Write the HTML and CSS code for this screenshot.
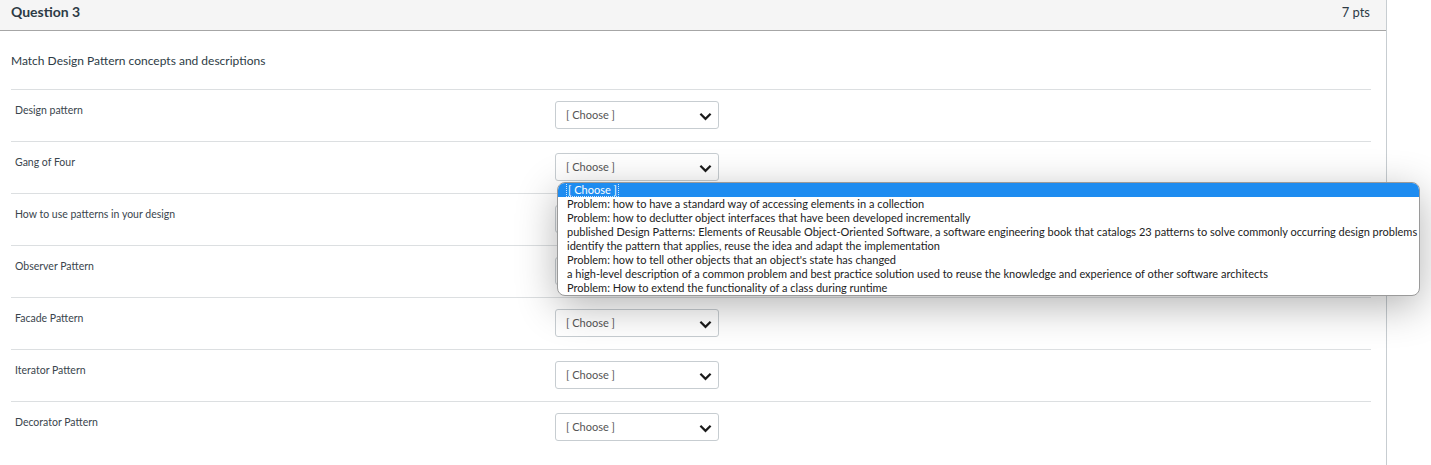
FILE: index.html
```html
<!DOCTYPE html>
<html lang="en">
<head>
    <meta charset="UTF-8">
    <title>Question 3</title>
    <link rel="stylesheet" href="styles.css">
</head>
<body>
    <div class="question">
        <div class="question-header">
            <span class="question-name">Question 3</span>
            <span class="question-points">7 pts</span>
        </div>
        <div class="question-text">Match Design Pattern concepts and descriptions</div>
        <div class="answers">
            <div class="answer">
                <div class="answer-label">Design pattern</div>
                <div class="select"><span>[ Choose ]</span><svg class="chevron" viewBox="0 0 14 9"><path d="M1.5 1.5 L7 7 L12.5 1.5"/></svg></div>
            </div>
            <div class="answer">
                <div class="answer-label">Gang of Four</div>
                <div class="select open"><span>[ Choose ]</span><svg class="chevron" viewBox="0 0 14 9"><path d="M1.5 1.5 L7 7 L12.5 1.5"/></svg>
                    <ul class="options">
                        <li class="selected"><span>[ Choose ]</span></li>
                        <li>Problem: how to have a standard way of accessing elements in a collection</li>
                        <li>Problem: how to declutter object interfaces that have been developed incrementally</li>
                        <li>published Design Patterns: Elements of Reusable Object-Oriented Software, a software engineering book that catalogs 23 patterns to solve commonly occurring design problems</li>
                        <li>identify the pattern that applies, reuse the idea and adapt the implementation</li>
                        <li>Problem: how to tell other objects that an object's state has changed</li>
                        <li>a high-level description of a common problem and best practice solution used to reuse the knowledge and experience of other software architects</li>
                        <li>Problem: How to extend the functionality of a class during runtime</li>
                    </ul>
                </div>
            </div>
            <div class="answer">
                <div class="answer-label">How to use patterns in your design</div>
                <div class="select"><span>[ Choose ]</span><svg class="chevron" viewBox="0 0 14 9"><path d="M1.5 1.5 L7 7 L12.5 1.5"/></svg></div>
            </div>
            <div class="answer">
                <div class="answer-label">Observer Pattern</div>
                <div class="select"><span>[ Choose ]</span><svg class="chevron" viewBox="0 0 14 9"><path d="M1.5 1.5 L7 7 L12.5 1.5"/></svg></div>
            </div>
            <div class="answer">
                <div class="answer-label">Facade Pattern</div>
                <div class="select"><span>[ Choose ]</span><svg class="chevron" viewBox="0 0 14 9"><path d="M1.5 1.5 L7 7 L12.5 1.5"/></svg></div>
            </div>
            <div class="answer">
                <div class="answer-label">Iterator Pattern</div>
                <div class="select"><span>[ Choose ]</span><svg class="chevron" viewBox="0 0 14 9"><path d="M1.5 1.5 L7 7 L12.5 1.5"/></svg></div>
            </div>
            <div class="answer">
                <div class="answer-label">Decorator Pattern</div>
                <div class="select"><span>[ Choose ]</span><svg class="chevron" viewBox="0 0 14 9"><path d="M1.5 1.5 L7 7 L12.5 1.5"/></svg></div>
            </div>
        </div>
    </div>
</body>
</html>
```

FILE: styles.css
```css
* {
    box-sizing: border-box;
    margin: 0;
    padding: 0;
}

body {
    font-family: Lato, 'Open Sans', sans-serif;
    color: #2d3b45;
    background: #fff;
    height: 465px;
    overflow: hidden;
}

.question {
    width: 1387px;
    height: 465px;
    border-right: 1px solid #c7cdd1;
}

.question-header {
    display: flex;
    justify-content: space-between;
    align-items: flex-start;
    height: 31px;
    padding: 3px 16px 0 11px;
    background-color: #f5f5f5;
    border-bottom: 1px solid #a6a6a6;
}

.question-name {
    font-size: 14px;
    font-weight: 700;
    color: #2d3b45;
}

.question-points {
    font-size: 13px;
    padding-top: 1px;
}

.question-text {
    font-size: 12px;
    padding: 22px 11px 0;
    height: 58px;
}

.answers {
    margin: 0 15px 0 11px;
}

.answer {
    display: grid;
    grid-template-columns: 544px 164px;
    align-items: center;
    border-top: 1px solid #dcdfe1;
    padding: 11px 0 12px;
}

.answer-label {
    font-size: 10.5px;
    padding-left: 4px;
    padding-bottom: 11px;
    color: #3a454d;
}

.select {
    position: relative;
    display: flex;
    justify-content: space-between;
    align-items: center;
    height: 28px;
    padding: 0 6px 2px 10px;
    border: 1px solid #c7cdd1;
    border-radius: 3px;
    background: #fff;
    font-size: 11px;
    color: #555;
}

.chevron {
    width: 13px;
    height: 9px;
    margin-top: 4px;
    fill: none;
    stroke: #1b1b1b;
    stroke-width: 2.4;
}

.options {
    position: absolute;
    left: 1px;
    top: 28px;
    width: 863px;
    list-style: none;
    background: #fff;
    border: 1px solid #9a9a9a;
    border-radius: 8px;
    overflow: hidden;
    box-shadow: 0 10px 40px rgba(0, 0, 0, 0.3);
    z-index: 2;
}

.options li {
    font-size: 11px;
    line-height: 14px;
    height: 14px;
    padding-left: 9px;
    color: #222;
    white-space: nowrap;
}

.options li.selected {
    background-color: #1e8cf0;
    color: #fff;
}

.options li.selected span {
    outline: 1px dotted #cfe6ff;
    padding: 0 1px;
}
```
